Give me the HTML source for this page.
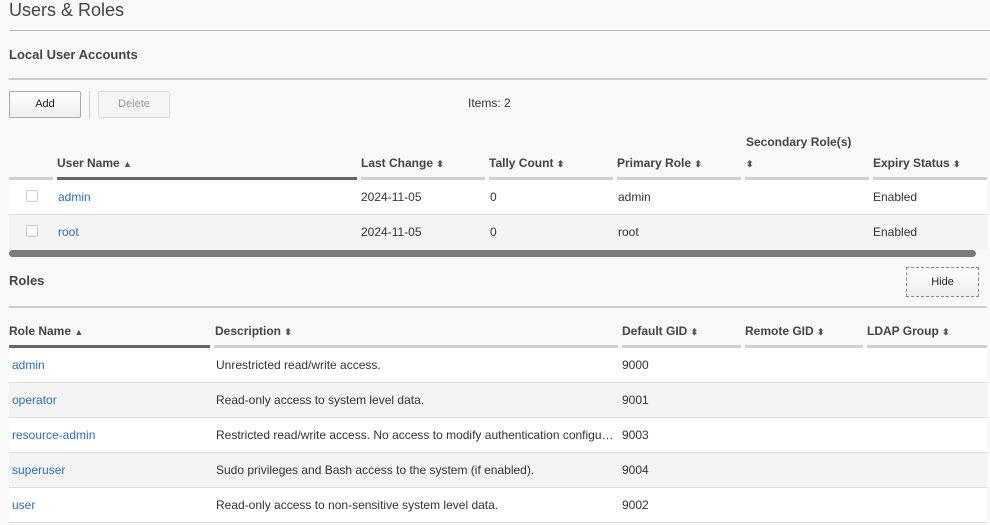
<!DOCTYPE html>
<html><head><style>
*{margin:0;padding:0;box-sizing:border-box}
body{width:990px;height:525px;background:#f9f9f9;font-family:"Liberation Sans",sans-serif;color:#333;position:relative;overflow:hidden;font-size:12px}
.a{position:absolute;white-space:nowrap}
.h{font-weight:bold;color:#444}
.lk{color:#2a6ccc}
.th{position:absolute;font-size:12px;font-weight:bold;color:#444;white-space:nowrap}
.ul{position:absolute;height:3px;background:#d0d0d0}
.ul.d{background:#666}
.row{position:absolute;left:9px;width:978px;height:35px;border-bottom:1px solid #ddd}
.s{font-size:9px;color:#555}
.cb{position:absolute;left:26px;width:12px;height:12px;border:1px solid #ccc;background:#fff;border-radius:2px}
</style></head><body>
<div class="a" style="left:9px;top:0;font-size:18px;color:#444">Users &amp; Roles</div>
<div class="a" style="left:9px;top:30px;width:981px;height:1px;background:#bbb"></div>
<div class="a h" style="left:9px;top:47px;font-size:13px">Local User Accounts</div>
<div class="a" style="left:9px;top:78px;width:978px;height:2px;background:#ccc"></div>
<div class="a" style="left:9px;top:91px;width:72px;height:27px;border:1px solid #aaa;border-radius:2px;background:linear-gradient(#fff,#eee);text-align:center;line-height:25px;font-size:11px;color:#222">Add</div>
<div class="a" style="left:89px;top:91px;width:1px;height:27px;background:#ccc"></div>
<div class="a" style="left:98px;top:91px;width:72px;height:27px;border:1px solid #ddd;border-radius:2px;background:#f5f5f5;text-align:center;line-height:25px;font-size:11px;color:#999">Delete</div>
<div class="a" style="left:468px;top:96px;font-size:12px">Items: 2</div>

<div class="th" style="left:57px;top:156px">User Name <span class="s">▲</span></div>
<div class="th" style="left:361px;top:156px">Last Change <span class="s">⬍</span></div>
<div class="th" style="left:489px;top:156px">Tally Count <span class="s">⬍</span></div>
<div class="th" style="left:617px;top:156px">Primary Role <span class="s">⬍</span></div>
<div class="th" style="left:746px;top:135px">Secondary Role(s)</div>
<div class="th" style="left:746px;top:156px"><span class="s">⬍</span></div>
<div class="th" style="left:873px;top:156px">Expiry Status <span class="s">⬍</span></div>
<div class="ul" style="left:9px;top:177px;width:44px"></div>
<div class="ul d" style="left:57px;top:177px;width:300px"></div>
<div class="ul" style="left:361px;top:177px;width:124px"></div>
<div class="ul" style="left:489px;top:177px;width:124px"></div>
<div class="ul" style="left:617px;top:177px;width:124px"></div>
<div class="ul" style="left:745px;top:177px;width:124px"></div>
<div class="ul" style="left:873px;top:177px;width:114px"></div>

<div class="row" style="top:180px;background:#fff"></div>
<div class="row" style="top:215px;background:#f4f4f4;border:none;height:35px"></div>
<div class="cb" style="top:190px"></div>
<div class="cb" style="top:225px"></div>
<div class="a lk" style="left:58px;top:190px">admin</div>
<div class="a" style="left:361px;top:190px">2024-11-05</div>
<div class="a" style="left:490px;top:190px">0</div>
<div class="a" style="left:618px;top:190px">admin</div>
<div class="a" style="left:873px;top:190px">Enabled</div>
<div class="a lk" style="left:58px;top:225px">root</div>
<div class="a" style="left:361px;top:225px">2024-11-05</div>
<div class="a" style="left:490px;top:225px">0</div>
<div class="a" style="left:618px;top:225px">root</div>
<div class="a" style="left:873px;top:225px">Enabled</div>
<div class="a" style="left:9px;top:250px;width:967px;height:7px;background:#7a7a7a;border-radius:4px"></div>

<div class="a h" style="left:9px;top:273px;font-size:13px">Roles</div>
<div class="a" style="left:906px;top:267px;width:73px;height:30px;border:1px dashed #888;background:linear-gradient(#fff,#eee);text-align:center;line-height:28px;font-size:11px;color:#222">Hide</div>
<div class="a" style="left:9px;top:306px;width:978px;height:2px;background:#ccc"></div>

<div class="th" style="left:9px;top:324px">Role Name <span class="s">▲</span></div>
<div class="th" style="left:215px;top:324px">Description <span class="s">⬍</span></div>
<div class="th" style="left:622px;top:324px">Default GID <span class="s">⬍</span></div>
<div class="th" style="left:745px;top:324px">Remote GID <span class="s">⬍</span></div>
<div class="th" style="left:867px;top:324px">LDAP Group <span class="s">⬍</span></div>
<div class="ul d" style="left:9px;top:345px;width:201px"></div>
<div class="ul" style="left:214px;top:345px;width:404px"></div>
<div class="ul" style="left:622px;top:345px;width:119px"></div>
<div class="ul" style="left:745px;top:345px;width:118px"></div>
<div class="ul" style="left:867px;top:345px;width:120px"></div>

<div class="row" style="top:348px;background:#fff"></div>
<div class="row" style="top:383px;background:#f4f4f4"></div>
<div class="row" style="top:418px;background:#fff"></div>
<div class="row" style="top:453px;background:#f4f4f4"></div>
<div class="row" style="top:488px;background:#fff"></div>

<div class="a lk" style="left:12px;top:358px">admin</div>
<div class="a" style="left:216px;top:358px">Unrestricted read/write access.</div>
<div class="a" style="left:622px;top:358px">9000</div>
<div class="a lk" style="left:12px;top:393px">operator</div>
<div class="a" style="left:216px;top:393px">Read-only access to system level data.</div>
<div class="a" style="left:622px;top:393px">9001</div>
<div class="a lk" style="left:12px;top:428px">resource-admin</div>
<div class="a" style="left:216px;top:428px;width:398px;overflow:hidden;text-overflow:ellipsis">Restricted read/write access. No access to modify authentication configuration.</div>
<div class="a" style="left:622px;top:428px">9003</div>
<div class="a lk" style="left:12px;top:463px">superuser</div>
<div class="a" style="left:216px;top:463px">Sudo privileges and Bash access to the system (if enabled).</div>
<div class="a" style="left:622px;top:463px">9004</div>
<div class="a lk" style="left:12px;top:498px">user</div>
<div class="a" style="left:216px;top:498px">Read-only access to non-sensitive system level data.</div>
<div class="a" style="left:622px;top:498px">9002</div>
</body></html>
